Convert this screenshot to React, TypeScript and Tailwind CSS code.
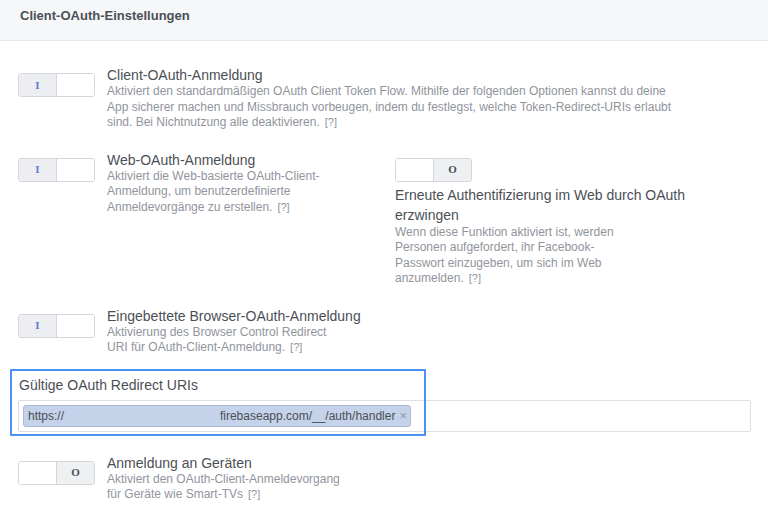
import { ReactNode } from "react";

const font = { fontFamily: '"Liberation Sans", Arial, sans-serif' };

const Toggle = ({ on }: { on: boolean }) => (
  <div className="flex h-[24px] w-[77px] shrink-0 overflow-hidden rounded-[3px] border border-[#d3d6db] bg-white">
    <div
      className={`flex w-[38px] items-center justify-center border-r border-[#d3d6db] ${on ? "bg-[#eceef2]" : "bg-white"}`}
    >
      {on && <span className="text-[11px] font-bold text-[#5b7bd5]" style={{ fontFamily: '"Liberation Serif", serif' }}>I</span>}
    </div>
    <div className={`flex flex-1 items-center justify-center ${on ? "bg-white" : "bg-[#eff0f2]"}`}>
      {!on && <span className="text-[11px] font-bold text-[#4b4f56]" style={{ fontFamily: '"Liberation Serif", serif' }}>O</span>}
    </div>
  </div>
);

const Help = () => (
  <span className="ml-[5px] inline-block whitespace-nowrap text-[11px] leading-[15px] text-[#90949c]">[?]</span>
);

const Option = ({ on, title, children, width }: { on: boolean; title: string; children: ReactNode; width?: string }) => (
  <div className="flex gap-[12px]">
    <div className="pt-[7px]">
      <Toggle on={on} />
    </div>
    <div>
      <div className="whitespace-nowrap text-[14px] leading-[18px] text-[#4b4f56]">{title}</div>
      <div className={`text-[12px] leading-[15.5px] text-[#90949c] ${width}`}>{children}</div>
    </div>
  </div>
);

export default function App() {
  return (
    <div className="h-[515px] w-[768px] overflow-hidden bg-white" style={font}>
      <div className="flex h-[41px] items-start border-b border-[#e5e6e9] bg-[#f6f7f9] px-[20px] pt-[6px]">
        <span className="text-[13px] font-bold leading-[20px] text-[#4b4f56]">Client-OAuth-Einstellungen</span>
      </div>

      <div className="flex flex-col px-[18px] pt-[25px]">
        <Option on title="Client-OAuth-Anmeldung" width="w-[572px]">
          Aktiviert den standardmäßigen OAuth Client Token Flow. Mithilfe der folgenden Optionen kannst du deine App
          sicherer machen und Missbrauch vorbeugen, indem du festlegst, welche Token-Redirect-URIs erlaubt sind. Bei
          Nichtnutzung alle deaktivieren.
          <Help />
        </Option>

        <div className="mt-[20px] flex">
          <div className="w-[377px]">
            <Option on title="Web-OAuth-Anmeldung" width="w-[220px]">
              Aktiviert die Web-basierte OAuth-Client-Anmeldung, um benutzerdefinierte Anmeldevorgänge zu erstellen.
              <Help />
            </Option>
          </div>
          <div className="flex flex-col">
            <div className="pt-[7px]">
              <Toggle on={false} />
            </div>
            <div className="mt-[3px] w-[320px] text-[14px] leading-[20px] text-[#4b4f56]">
              Erneute Authentifizierung im Web durch OAuth erzwingen
            </div>
            <div className="w-[230px] text-[12px] leading-[15.5px] text-[#90949c]">
              Wenn diese Funktion aktiviert ist, werden Personen aufgefordert, ihr Facebook-Passwort einzugeben, um sich
              im Web anzumelden.
              <Help />
            </div>
          </div>
        </div>

        <div className="mt-[20px]">
          <Option on title="Eingebettete Browser-OAuth-Anmeldung" width="w-[230px]">
            Aktivierung des Browser Control Redirect URI für OAuth-Client-Anmeldung.
            <Help />
          </Option>
        </div>
      </div>

      <div className="relative mx-[10px] mt-[13px] h-[67px]">
        <div className="absolute left-0 top-0 h-[67px] w-[416px] rounded-[1px] border-2 border-[#4a90f5]" />
        <div className="px-[9px] pt-[7px] text-[14px] leading-[18px] text-[#4b4f56]">Gültige OAuth Redirect URIs</div>
        <div className="ml-[8px] mt-[6px] flex h-[32px] w-[733px] items-center rounded-[2px] border border-[#dddfe2] bg-white px-[4px]">
          <div className="flex h-[22px] w-[388px] items-center rounded-[3px] border border-[#a9bbd8] bg-[#c4d3e9] pl-[4px] pr-[3px] text-[12px] text-[#4b4f56]">
            <span>https://</span>
            <span className="ml-auto">firebaseapp.com/__/auth/handler</span>
            <span className="ml-[4px] text-[13px] leading-none text-[#8d98aa]">×</span>
          </div>
        </div>
      </div>

      <div className="px-[18px] pt-[18px]">
        <Option on={false} title="Anmeldung an Geräten" width="w-[240px]">
          Aktiviert den OAuth-Client-Anmeldevorgang für Geräte wie Smart-TVs
          <Help />
        </Option>
      </div>
    </div>
  );
}
